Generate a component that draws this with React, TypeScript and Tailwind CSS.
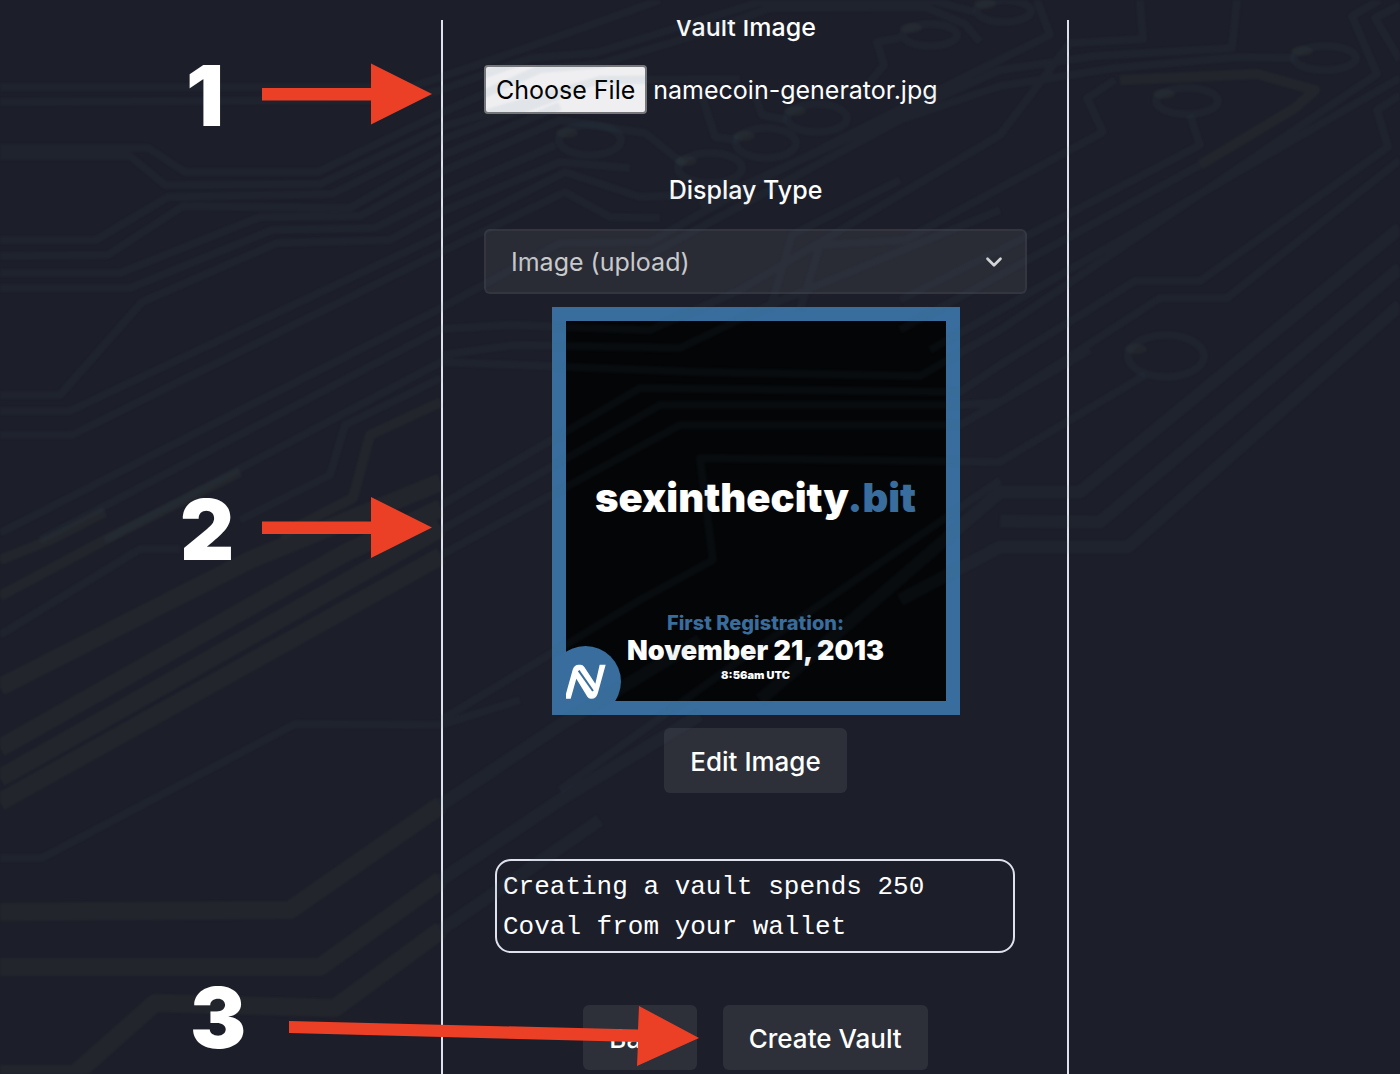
import { ChevronDown } from "lucide-react";

const tealTraces = [
  "M0 87H410L441 77L560 36L660 0",
  "M0 102L400 100L441 90L530 58L595 53L760 2L930 0L975 12",
  "M0 148H148L185 172H318L441 113L540 69L600 64L700 34L770 8L925 7L965 24L980 42",
  "M0 156H130L165 185L320 184L441 127L600 80L740 79",
  "M0 240H96L168 197L332 194L441 140L560 95",
  "M0 256L108 255L183 206L350 208L441 156L560 106",
  "M0 273H120L260 217L360 216L441 172L560 120L645 133L685 165",
  "M0 288H130L272 230L375 228L441 195L555 145",
  "M0 395H60L142 302L277 243L390 240L441 212L560 162L630 168",
  "M0 411H70L441 235L565 172L640 197L690 195",
  "M0 435H72L441 252L565 192L610 217L660 218",
  "M0 533L441 308L560 243L650 242L760 180L890 114L1050 35L1037 0",
  "M40 540L441 329L510 325L650 330L740 290L1000 135L1070 43L1143 39L1140 0",
  "M441 355L515 345L680 348L770 305L1000 210",
  "M105 540L441 362L520 365L700 372L920 376L1000 330L1377 74L1352 16L1380 0",
  "M700 205L1000 70L1095 56L1232 48L1237 0",
  "M640 260L900 120L1000 86L1115 68L1240 57L1295 58",
  "M441 505L640 388L960 392L1000 365L1135 281H1200L1388 147L1377 110L1400 95",
  "M441 530L660 405H960L1000 402L1160 298H1227L1400 160",
  "M441 555L680 425H960L1090 350",
  "M441 720L640 600L713 560L700 458L1000 462L1145 375",
  "M560 790L740 660L1000 480",
  "M441 378L345 425L330 475L240 520",
  "M0 635L140 549H180",
  "M0 858H42L295 724L441 725L520 700",
  "M1400 60L1375 18L1400 5",
  "M1400 78L1000 310L930 350",
  "M1200 165L1000 275L900 330",
  "M1115 80L1087 98L1103 132L1000 188L905 240L820 245L800 310",
  "M1190 115L1200 145L1000 250L900 300",
  "M770 310L792 235L900 180",
  "M900 38L877 42L884 65L870 82",
  "M700 90L715 137L737 140",
  "M755 95L762 115L787 120",
];

const wideTealTraces = [
  "M1400 228L1080 492H1000L760 700",
  "M1400 268L1100 522L1000 521",
  "M1400 305L1128 547H1000L900 600",
  "M441 805L560 725L700 640",
  "M441 880L560 800L700 715",
  "M441 930L600 820",
];

const brownTraces = [
  "M0 560L50 540L105 512",
  "M0 596L105 540L240 472",
  "M441 402L370 435L353 498L280 535",
  "M1120 80L1257 74L1315 90L1295 108L1200 165",
];

const wideBrownTraces = [
  "M0 687L250 560L441 482",
  "M0 748L345 553L441 508",
  "M0 778L441 528",
  "M0 802L441 556",
  "M0 912L290 910L441 805",
  "M0 967H320L441 880",
  "M0 1074H75L155 1003L335 1008L441 930",
];

const pads = [
  { x: 930, y: 35, rx: 27, ry: 11 },
  { x: 1004, y: 11, rx: 27, ry: 11 },
  { x: 817, y: 118, rx: 30, ry: 14 },
  { x: 766, y: 143, rx: 30, ry: 15 },
  { x: 710, y: 168, rx: 32, ry: 15 },
  { x: 590, y: 140, rx: 31, ry: 15 },
  { x: 1187, y: 101, rx: 31, ry: 13 },
  { x: 1325, y: 58, rx: 31, ry: 12 },
  { x: 1166, y: 356, rx: 38, ry: 21 },
];

function CircuitTexture() {
  return (
    <svg
      aria-hidden="true"
      className="pointer-events-none absolute left-0 top-0 blur-[1px]"
      width="1400"
      height="1074"
      viewBox="0 0 1400 1074"
      fill="none"
      strokeLinejoin="round"
    >
      <g stroke="#3c6c70" strokeOpacity="0.08">
        <path d={tealTraces.join("")} strokeWidth="8" />
        <path d={wideTealTraces.join("")} strokeWidth="13" />
        {pads.map((p) => (
          <ellipse key={p.x} cx={p.x} cy={p.y} rx={p.rx} ry={p.ry} strokeWidth="8" />
        ))}
      </g>
      <g stroke="#6e7e5a" strokeOpacity="0.08">
        <path d={brownTraces.join("")} strokeWidth="10" />
        <path d={wideBrownTraces.join("")} strokeWidth="18" />
      </g>
      <g fill="#6e7e5a" fillOpacity="0.08">
        {pads.map((p) => (
          <ellipse key={p.x} cx={p.x - p.rx + 8} cy={p.y - 7} rx="11" ry="5" />
        ))}
      </g>
    </svg>
  );
}

function NamecoinMark() {
  return (
    <svg viewBox="0 0 126 110" className="w-[42px]" aria-label="Namecoin" role="img">
      <path
        fill="#fff"
        d="M2 107L26 20Q31 5 44 5H50Q56 5 61 12L94 62L107 5H125L101 92Q96 107 84 107H80Q74 107 70 101L37 47L20 107Z"
      />
      <path d="M44 23L87 84" stroke="#386d9d" strokeWidth="6" />
    </svg>
  );
}

function VaultArtwork() {
  return (
    <figure className="relative mx-auto mt-[13px] flex aspect-square w-[408px] max-w-full flex-col items-center justify-end overflow-hidden border-[14px] border-[#386d9d] bg-[#040507] pb-[18px] font-black text-white">
      <p className="mb-[89px] text-[40px] leading-[48px]">
        sexinthecity<span className="text-[#386d9d]">.bit</span>
      </p>
      <p className="text-[20px] leading-6 font-extrabold text-[#386d9d]">First Registration:</p>
      <p className="text-[27px] leading-8">November 21, 2013</p>
      <p className="text-[11px] leading-4">8:56am UTC</p>
      <div className="absolute -bottom-4 -left-4 flex size-[71px] items-center justify-center rounded-full bg-[#386d9d]">
        <NamecoinMark />
      </div>
    </figure>
  );
}

function Annotations() {
  return (
    <div className="pointer-events-none absolute left-0 top-0 text-[84px] leading-none font-black text-white">
      <span className="absolute left-[186px] top-[54px]">1</span>
      <span className="absolute left-[180px] top-[488px]">2</span>
      <span className="absolute left-[190px] top-[976px]">3</span>
      <svg
        aria-hidden="true"
        className="absolute left-0 top-0 max-w-none"
        width="720"
        height="1074"
        viewBox="0 0 720 1074"
        fill="#eb4026"
      >
        <path d="M262 88H371V63.500L432 94L371 124.500V100.500H262Z" />
        <path d="M262 521.500H371V497L432 527.500L371 558V534H262Z" />
        <path d="M289 1021L638 1029.500L639 1006L699 1038L637 1066L638 1042L289 1033Z" />
      </svg>
    </div>
  );
}

const buttonClass = "h-[65px] rounded-md bg-white/8 px-[26px] pt-[3px] text-[26px] font-medium";

export default function App() {
  return (
    <div className="relative min-h-screen overflow-hidden bg-[#1c1e29] font-[Inter,sans-serif] text-[25px] leading-10 text-white">
      <main className="flex min-h-screen justify-center pt-5 pl-[110px]">
        <section className="w-[628px] max-w-full overflow-hidden border-x-2 border-[#dfe1ee] pr-10 pl-[41px]">
          <label htmlFor="vault-file" className="-mt-[13px] mr-5 block text-center font-medium">
            Vault Image
          </label>
          <div className="mt-[18px] flex items-center gap-1.5">
            <label
              htmlFor="vault-file"
              className="rounded-sm border-2 border-[#77777b] bg-[#efeff2] px-2.5 pt-0.5 leading-[43px] text-black"
            >
              Choose File
            </label>
            <input id="vault-file" type="file" className="sr-only" />
            <span>namecoin-generator.jpg</span>
          </div>

          <label htmlFor="display-type" className="mt-14 mr-5 block text-center font-medium">
            Display Type
          </label>
          <div className="relative mt-[19px]">
            <select
              id="display-type"
              className="h-[65px] w-full appearance-none rounded-md border-2 border-white/5 bg-white/6 px-[25px] text-white/75"
            >
              <option>Image (upload)</option>
            </select>
            <ChevronDown
              aria-hidden="true"
              className="pointer-events-none absolute top-5 right-5 size-[26px] text-white/80"
              strokeWidth={2.5}
            />
          </div>

          <VaultArtwork />
          <div className="mt-[13px] flex justify-center">
            <button type="button" className={buttonClass}>
              Edit Image
            </button>
          </div>

          <p className="mr-3 ml-[11px] mt-[66px] rounded-2xl border-2 border-[#dfe1ee] px-1.5 pt-1.5 pb-1 font-[Liberation_Mono,monospace] text-[26px]">
            Creating a vault spends 250 Coval from your wallet
          </p>

          <div className="mt-[52px] flex justify-center gap-[26px]">
            <button type="button" className={buttonClass}>
              Back
            </button>
            <button type="button" className={buttonClass}>
              Create Vault
            </button>
          </div>
        </section>
      </main>
      <CircuitTexture />
      <Annotations />
    </div>
  );
}
